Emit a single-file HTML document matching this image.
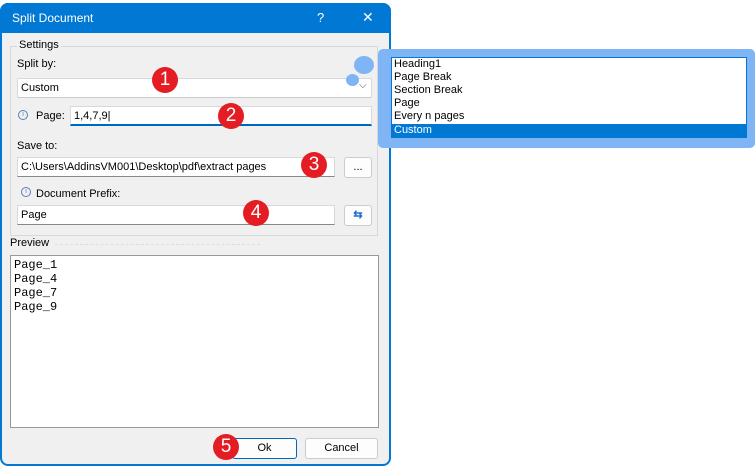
<!DOCTYPE html>
<html><head><style>
*{box-sizing:border-box;margin:0;padding:0}
body{width:755px;height:468px;background:#fff;position:relative;overflow:hidden;font-family:"Liberation Sans",sans-serif;font-size:11px;color:#000}
.a{position:absolute}
.dlg{left:0;top:3px;width:391px;height:463px;background:#f0f0f0;border:2px solid #0078d4;border-radius:8px;overflow:hidden}
.title{left:0;top:0;width:391px;height:31px;background:#0078d4;color:#fff;font-size:12px}
.inp{background:#fff;border:1px solid #d9d9d9;border-bottom:1px solid #888;padding-left:3px;line-height:19px}
.btn{background:#fdfdfd;border:1px solid #ccc;border-radius:3px;text-align:center}
.red{width:26px;height:26px;border-radius:50%;background:#e41c23;color:#fff;font-size:19px;text-align:center;line-height:26px}
</style></head><body>
<div class="a dlg"></div>
<div class="a title" style="left:0;top:3px;border-radius:8px 8px 0 0;height:30px"></div>
<div class="a" style="left:12px;top:11px;color:#fff;font-size:12px">Split Document</div>
<div class="a" style="left:317px;top:10px;color:#fff;font-size:13px">?</div>
<div class="a" style="left:362px;top:9px;color:#fff;font-size:14px">✕</div>
<div class="a" style="left:10px;top:46px;width:368px;height:190px;border:1px solid #d8d8d8"></div>
<div class="a" style="left:17px;top:39px;background:#f0f0f0;padding:0 2px">Settings</div>
<div class="a" style="left:17px;top:58px">Split by:</div>
<div class="a inp" style="left:17px;top:78px;width:355px;height:20px;border-bottom-color:#ccc;border-radius:2px">Custom</div>
<div class="a" style="left:359px;top:80px;font-size:10px;color:#555">⌵</div>
<div class="a" style="left:18px;top:110px;width:10px;height:10px;border:1px solid #5a7fb8;border-radius:50%;font-size:7px;text-align:center;line-height:8px;color:#5a7fb8">i</div>
<div class="a" style="left:36px;top:110px">Page:</div>
<div class="a inp" style="left:70px;top:106px;width:302px;height:20px;border-bottom:2px solid #0067c0">1,4,7,9|</div>
<div class="a" style="left:17px;top:140px">Save to:</div>
<div class="a inp" style="left:17px;top:157px;width:318px;height:20px">C:\Users\AddinsVM001\Desktop\pdf\extract pages</div>
<div class="a btn" style="left:344px;top:157px;width:28px;height:21px;line-height:18px">...</div>
<div class="a" style="left:21px;top:187px;width:10px;height:10px;border:1px solid #5a7fb8;border-radius:50%;font-size:7px;text-align:center;line-height:8px;color:#5a7fb8">i</div>
<div class="a" style="left:36px;top:188px">Document Prefix:</div>
<div class="a inp" style="left:17px;top:205px;width:318px;height:20px">Page</div>
<div class="a btn" style="left:344px;top:205px;width:28px;height:21px;line-height:18px;color:#1f6fd0;font-weight:bold">⇆</div>
<div class="a" style="left:10px;top:237px">Preview</div>
<div class="a" style="left:55px;top:244px;width:205px;border-top:1px dashed #ddd"></div>
<div class="a" style="left:10px;top:255px;width:369px;height:173px;background:#fff;border:1px solid #999;font-family:'Liberation Mono',monospace;font-size:12px;line-height:14px;padding:2px 3px">Page_1<br>Page_4<br>Page_7<br>Page_9</div>
<div class="a btn" style="left:232px;top:438px;width:65px;height:21px;line-height:19px;border-color:#0067c0">Ok</div>
<div class="a btn" style="left:305px;top:438px;width:73px;height:21px;line-height:19px">Cancel</div>
<div class="a red" style="left:152px;top:67px">1</div>
<div class="a red" style="left:218px;top:103px">2</div>
<div class="a red" style="left:301px;top:152px">3</div>
<div class="a red" style="left:243px;top:200px">4</div>
<div class="a red" style="left:213px;top:434px">5</div>
<div class="a" style="left:354px;top:56px;width:20px;height:18px;border-radius:50%;background:#7fb4f5"></div>
<div class="a" style="left:346px;top:74px;width:13px;height:12px;border-radius:50%;background:#7fb4f5"></div>
<div class="a" style="left:378px;top:49px;width:377px;height:99px;background:#7fb4f5;border-radius:5px"></div>
<div class="a" style="left:391px;top:57px;width:356px;height:81px;background:#fff;border:1px solid #0078d4;line-height:13px;padding-left:2px">Heading1<br>Page Break<br>Section Break<br>Page<br>Every n pages</div>
<div class="a" style="left:391px;top:124px;width:356px;height:14px;background:#0078d4;color:#fff;line-height:13px;padding-left:3px">Custom</div>
</body></html>
